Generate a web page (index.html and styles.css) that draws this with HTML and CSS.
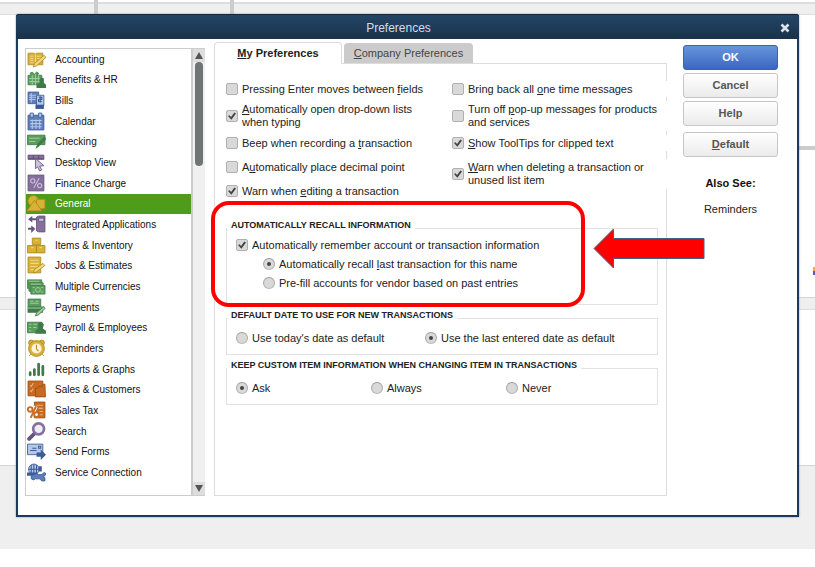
FILE: index.html
```html
<!DOCTYPE html>
<html lang="en">
<head>
    <meta charset="UTF-8">
    <meta name="viewport" content="width=device-width, initial-scale=1.0">
    <title>Preferences</title>
    <link rel="stylesheet" href="styles.css">
</head>
<body>
    <!-- home page behind the dialog -->
    <div class="backdrop">
        <div class="strip-top"></div>
        <div class="card card-tall"></div>
        <div class="strip"></div>
        <div class="card card-short"></div>
        <div class="strip-bottom"></div>
        <div class="pipe pipe-a"></div>
        <div class="pipe pipe-b"></div>
        <div class="pipe-right"></div>
        <div class="sliver"></div>
    </div>

    <div class="dialog" role="dialog" aria-labelledby="title">
        <div class="titlebar">
            <h1 id="title">Preferences</h1>
            <button class="close" type="button" aria-label="Close">
                <svg viewBox="0 0 10 10"><path d="M1.5 1.5l7 7M8.500 1.500l-7 7"/></svg>
            </button>
        </div>

        <div class="content">
            <div class="sidebar">
                <nav class="list">
                    <a href="#" class="item yellow">
                        <svg viewBox="0 0 18 18"><path class="f" d="M1 3h6l1 1 1-1h6v11H9l-1 1-1-1H1z"/><path class="w" d="M3 6h3M3 8h3M3 10h3M3 12h3M9.500 6h4M9.500 8h3M8 4v10"/><path class="l" d="M6 16l1-3 9-8 2 2-9 8z"/></svg>
                        Accounting</a>
                    <a href="#" class="item green">
                        <svg viewBox="0 0 18 18"><path class="f" d="M1 5h3l-1-2 2-1 2 2 2-2 2 1-1 2h4v9H1z"/><path class="w" d="M2 8h12M2 11h10M5 5v9M8 4v10M11 5v5"/><path class="d" d="M9 17v-3l3-2v-4l2-1 2 1v4l2 2v3z"/></svg>
                        Benefits &amp; HR</a>
                    <a href="#" class="item blue">
                        <svg viewBox="0 0 18 18"><path class="f" d="M1 1h10v11H1z"/><path class="w" d="M2 4h8M2 6h8M2 8h6M4 2v9"/><path class="l" d="M9 4h7v10H9z"/><path class="d" d="M8 13h8v4H8z"/><path class="k" d="M11 6h3v2h-3v2h3M12.500 5v6"/></svg>
                        Bills</a>
                    <a href="#" class="item blue">
                        <svg viewBox="0 0 18 18"><path class="f" d="M1 3h15v14H1z"/><path class="w" d="M3 8h11M3 11h11M3 14h11M5 7v9M8.500 7v9M12 7v9"/><path class="l" d="M3 1h3v4H3zM11 1h3v4h-3z"/></svg>
                        Calendar</a>
                    <a href="#" class="item green">
                        <svg viewBox="0 0 18 18"><path class="f" d="M0.500 3h16.500v9H.5z"/><path class="w" d="M2 6h10M2 9h6"/><path class="d" d="M8 16l2-5 7-7 1 3-7 7z"/></svg>
                        Checking</a>
                    <a href="#" class="item purple">
                        <svg viewBox="0 0 18 18"><path class="f" d="M1 2h5v4H1zM6 2h5v4H6zM11 2h5v4h-5z"/><path class="d" d="M1 5h15v1H1z"/><path class="l" d="M8 5l8 7-4 .5 2 3.500-2 1-2-4-2 2z"/></svg>
                        Desktop View</a>
                    <a href="#" class="item purple">
                        <svg viewBox="0 0 18 18"><path class="f" d="M1 1h15v15H1z"/><path class="w" d="M11.500 4l-5 9"/><circle class="w" cx="5.500" cy="6.500" r="2"/><circle class="w" cx="12" cy="11" r="2"/></svg>
                        Finance Charge</a>
                    <a href="#" class="item yellow selected">
                        <svg viewBox="0 0 18 18"><circle class="f" cx="6" cy="6.500" r="5"/><path class="f" d="M9 5h8v9H9z"/><path class="f" d="M7 6l7 10H0z"/></svg>
                        General</a>
                    <a href="#" class="item purple">
                        <svg viewBox="0 0 18 18"><path class="f" d="M9 2l2-1h6v15h-6l-2-1z"/><path class="l" d="M11 3h5v3h-5z"/><path class="d" d="M1 4l4-3v2h4v2H5v2zM8 13l-4-3v2H1v2h3v3z"/></svg>
                        Integrated Applications</a>
                    <a href="#" class="item yellow">
                        <svg viewBox="0 0 18 18"><path class="f" d="M5 2h8v6H5zM.5 9H9v7H.5zM9 9h8v7H9z"/><path class="w" d="M8 4h2M4 11h2M12 11h2"/></svg>
                        Items &amp; Inventory</a>
                    <a href="#" class="item yellow">
                        <svg viewBox="0 0 18 18"><path class="f" d="M1 1h12v15H1z"/><path class="w" d="M3 4h8M3 7h8M3 10h7M3 13h4"/><path class="l" d="M6 16l1-3 8-6 2 2-8 6z"/></svg>
                        Jobs &amp; Estimates</a>
                    <a href="#" class="item green">
                        <svg viewBox="0 0 20 18"><path class="f" d="M.5 2h15v9H.5z"/><path class="f" d="M2 5h15v9H2z"/><path class="f" d="M4 8h15v9H4z"/><path class="w" d="M2 3.500h11M4 6.500h11M6 10h2M15 10h2M6 15h2M15 15h2"/><circle class="w" cx="11.500" cy="12.500" r="2.500"/></svg>
                        Multiple Currencies</a>
                    <a href="#" class="item green">
                        <svg viewBox="0 0 18 18"><path class="f" d="M1 1h12v7H1z"/><path class="w" d="M3 3h3M8 3h3M3 5h8"/><path class="d" d="M.5 8H15v6H.5z"/><path class="w" d="M1 9.500h13"/><path class="l" d="M8 17l1-3 7-6 1 2-6 6z"/></svg>
                        Payments</a>
                    <a href="#" class="item green">
                        <svg viewBox="0 0 18 18"><path class="f" d="M.5 4H14v10H.5z"/><path class="w" d="M2 6h2M2 9h2M2 12h2M6 6h4M6 9h3"/><path class="d" d="M8 15v-3l3-2-1-4 2-2h2l2 2-1 4 3 2v3z"/></svg>
                        Payroll &amp; Employees</a>
                    <a href="#" class="item yellow">
                        <svg viewBox="0 0 18 18"><circle class="f" cx="4" cy="3.500" r="2.500"/><circle class="f" cx="14" cy="3.500" r="2.500"/><path class="f" d="M4 14l-2 2M14 14l2 2"/><circle class="f" cx="9" cy="9" r="7.500"/><circle class="p" cx="9" cy="9" r="4.800"/><path class="k" d="M9 5.500v4l2 2"/></svg>
                        Reminders</a>
                    <a href="#" class="item green">
                        <svg viewBox="0 0 18 18"><path class="bars" d="M3 12v2M7 9v5M11 4v10M15 6v8"/></svg>
                        Reports &amp; Graphs</a>
                    <a href="#" class="item orange">
                        <svg viewBox="0 0 18 18"><path class="f" d="M1 1h14v14H1z"/><path class="w" d="M3 5l1 1 2-3M3 10l1 1 2-3"/><path class="f" d="M8 8h2l1-2h2l1 1 1-3h2l.5 12H8z"/></svg>
                        Sales &amp; Customers</a>
                    <a href="#" class="item orange">
                        <svg viewBox="0 0 18 18"><path class="f" d="M7 1h10v15H7z"/><path class="w" d="M9 4h6M11 7h4M12 10h3M12 13h3"/><path class="halo" d="M8.500 5l-5 11"/><path class="o" d="M8.500 5l-5 11"/><circle class="q" cx="3" cy="8" r="2.200"/><circle class="q" cx="9" cy="13" r="2.200"/></svg>
                        Sales Tax</a>
                    <a href="#" class="item purple">
                        <svg viewBox="0 0 18 18"><path class="handle" d="M7 11l-5 5"/><circle class="lens" cx="11" cy="6.500" r="5.200"/></svg>
                        Search</a>
                    <a href="#" class="item blue">
                        <svg viewBox="0 0 18 18"><path class="l" d="M.5 2H15v10H.5z"/><path class="k" d="M3 8h6M5 6h4M11 4h2v2h-2z"/><path class="d" d="M9 10h4V7l5 5-5 5v-3H9z"/></svg>
                        Send Forms</a>
                    <a href="#" class="item blue">
                        <svg viewBox="0 0 18 18"><circle class="l" cx="6.500" cy="6" r="5"/><path class="k" d="M1 6h11M6.500 1v10M4 2v8M9 2v8"/><path class="d" d="M0 9h10v3H0zM11 3h3v5h-3z"/><path class="f" d="M4 12l5-2 2 1h3l2-2 2 1-1 2-2 1 2 1v3h-3l-2-2H8l-2 1-2-1z"/></svg>
                        Service Connection</a>
                </nav>
                <div class="scrollbar">
                    <span class="arrow-up"></span>
                    <span class="thumb"></span>
                    <span class="arrow-down"></span>
                </div>
            </div>

            <div class="main">
                <div class="tabs" role="tablist">
                    <button class="tab active" type="button" role="tab" aria-selected="true"><span><u>M</u>y Preferences</span></button>
                    <button class="tab" type="button" role="tab" aria-selected="false"><span><u>C</u>ompany Preferences</span></button>
                </div>

                <form class="panel">
                    <div class="options">
                        <div class="column">
                            <label class="option"><input type="checkbox"><span>Pressing Enter moves between <u>f</u>ields</span></label>
                            <label class="option tall"><input type="checkbox" checked><span><u>A</u>utomatically open drop-down lists<br>when typing</span></label>
                            <label class="option"><input type="checkbox"><span>Beep when recording a <u>t</u>ransaction</span></label>
                            <label class="option spaced"><input type="checkbox"><span>A<u>u</u>tomatically place decimal point</span></label>
                            <label class="option spaced"><input type="checkbox" checked><span>Warn when <u>e</u>diting a transaction</span></label>
                        </div>
                        <div class="column column-right">
                            <label class="option"><input type="checkbox"><span>Bring back all <u>o</u>ne time messages</span></label>
                            <label class="option tall"><input type="checkbox"><span>Turn off <u>p</u>op-up messages for products<br>and services</span></label>
                            <label class="option"><input type="checkbox" checked><span><u>S</u>how ToolTips for clipped text</span></label>
                            <label class="option tall spaced"><input type="checkbox" checked><span><u>W</u>arn when deleting a transaction or<br>unused list item</span></label>
                        </div>
                    </div>

                    <fieldset class="recall">
                        <legend>AUTOMATICALLY RECALL INFORMATION</legend>
                        <label class="option"><input type="checkbox" checked><span>Automatically remember account or transaction information</span></label>
                        <label class="option indent"><input type="radio" name="recall" checked><span>Automatically recall <u>l</u>ast transaction for this name</span></label>
                        <label class="option indent"><input type="radio" name="recall"><span>Pre-fill accounts for vendor based on past entries</span></label>
                        <div class="highlight"></div>
                        <svg class="arrow" viewBox="0 0 112 41"><path d="M1 20.500L20.500 1v9.500H111v20H20.500V40z"/></svg>
                    </fieldset>

                    <fieldset>
                        <legend>DEFAULT DATE TO USE FOR NEW TRANSACTIONS</legend>
                        <div class="choices two">
                            <label class="option"><input type="radio" name="date"><span>Use today's date as default</span></label>
                            <label class="option"><input type="radio" name="date" checked><span>Use the last entered date as default</span></label>
                        </div>
                    </fieldset>

                    <fieldset>
                        <legend>KEEP CUSTOM ITEM INFORMATION WHEN CHANGING ITEM IN TRANSACTIONS</legend>
                        <div class="choices three">
                            <label class="option"><input type="radio" name="keep" checked><span>Ask</span></label>
                            <label class="option"><input type="radio" name="keep"><span>Always</span></label>
                            <label class="option"><input type="radio" name="keep"><span>Never</span></label>
                        </div>
                    </fieldset>
                </form>
            </div>

            <div class="actions">
                <button class="btn primary" type="button">OK</button>
                <button class="btn" type="button">Cancel</button>
                <button class="btn" type="button">Help</button>
                <button class="btn default" type="button"><span><u>D</u>efault</span></button>
                <h2>Also See:</h2>
                <a href="#">Reminders</a>
            </div>
        </div>
    </div>
</body>
</html>
```
FILE: styles.css
```css
* {
    box-sizing: border-box;
    margin: 0;
    padding: 0;
}
body {
    position: relative;
    min-height: 100vh;
    padding: 14px 16px 0;
    overflow: hidden;
    font: 11px/13px "Liberation Sans", Arial, sans-serif;
    color: #222;
    background: #fff;
}
button {
    font: inherit;
    color: inherit;
}
a {
    color: inherit;
    text-decoration: none;
}

/* backdrop */
.backdrop {
    position: absolute;
    inset: 0;
    display: flex;
    flex-direction: column;
    padding: 2px 0 18px;
}
.strip-top {
    height: 12px;
    border-top: 2px solid #dcdcdc;
    background: #efefef;
}
.card {
    border-top: 1px solid #ddd;
    border-bottom: 1px solid #d4d4d4;
    background: #fff;
}
.card-tall {
    height: 284px;
}
.strip {
    height: 11px;
    background: #efefef;
}
.card-short {
    height: 157px;
}
.strip-bottom {
    flex: 1;
    background: #efefef;
}
.pipe {
    position: absolute;
    top: 0;
    width: 4px;
    height: 14px;
    background: #ccc;
}
.pipe-a {
    left: 94px;
}
.pipe-b {
    left: 230px;
}
.pipe-right {
    position: absolute;
    top: 146px;
    right: 0;
    width: 16px;
    height: 4px;
    background: #ccc;
}
.sliver {
    position: absolute;
    top: 267px;
    right: 0;
    width: 2px;
    height: 8px;
    background: linear-gradient(#f0b040 4px, #5b5ba8 4px);
}

/* dialog */
.dialog {
    position: relative;
    display: flex;
    flex-direction: column;
    min-height: calc(100vh - 64px);
    border: 2px solid #1b3a5c;
    border-top: 0;
    border-radius: 3px 3px 0 0;
    background: #fff;
    box-shadow: 0 0 2px #888;
}
.titlebar {
    position: relative;
    height: 25px;
    margin: 0 -2px;
    border-top: 1px solid #14283c;
    border-radius: 3px 3px 0 0;
    background: linear-gradient(#234566, #1a324b);
    text-align: center;
}
.titlebar h1 {
    padding-right: 18px;
    font-size: 12px;
    font-weight: normal;
    line-height: 26px;
    color: #d5dce4;
}
.close {
    position: absolute;
    top: 8px;
    right: 9px;
    width: 10px;
    height: 10px;
    border: 0;
    background: none;
}
.close svg {
    display: block;
    fill: none;
    stroke: #dde3ea;
    stroke-width: 2.5;
}
.content {
    flex: 1;
    display: flex;
    padding: 3px 19px 19px 7px;
}

/* category list */
.sidebar {
    display: flex;
    width: 180px;
    margin: 6px 9px 0 0;
    border: 1px solid #ccc;
    border-right: 0;
}
.list {
    flex: 1;
    display: grid;
    grid-template-rows: repeat(21, 1fr);
    padding-bottom: 12px;
}
.item {
    display: flex;
    align-items: center;
    gap: 9px;
    padding-left: 1px;
    font-size: 10px;
    color: #111;
}
.item svg {
    width: 19px;
    height: 19px;
}
.selected {
    color: #fff;
    background: #4e9c19;
}
.yellow {
    --base: #d8b234;
    --dark: #b08a22;
    --light: #f0d880;
}
.green {
    --base: #5a9e5e;
    --dark: #3f7a49;
    --light: #9fcc9c;
}
.blue {
    --base: #5f7fbb;
    --dark: #3c5a94;
    --light: #b4c8ea;
}
.purple {
    --base: #84709a;
    --dark: #65537a;
    --light: #cdbfe0;
}
.orange {
    --base: #c86a20;
    --dark: #9c4c12;
    --light: #eab080;
}
.f {
    fill: var(--base);
    stroke: var(--dark);
    stroke-width: 0.8;
}
.d {
    fill: var(--dark);
}
.l {
    fill: var(--light);
    stroke: var(--dark);
    stroke-width: 0.8;
}
.p {
    fill: #fdf6dc;
}
.w,
.k,
.o,
.halo {
    fill: none;
    stroke: var(--light);
}
.k {
    stroke: var(--dark);
}
.o {
    stroke: var(--base);
    stroke-width: 1.8;
}
.halo {
    stroke: #fff;
    stroke-width: 3.5;
}
.q {
    fill: #fff;
    stroke: var(--base);
    stroke-width: 1.8;
}
.bars {
    stroke: var(--dark);
    stroke-width: 2.6;
    stroke-linecap: round;
}
.handle {
    stroke: var(--dark);
    stroke-width: 3.5;
    stroke-linecap: round;
}
.lens {
    fill: #f0ecf6;
    stroke: var(--base);
    stroke-width: 2.5;
}
.scrollbar {
    display: flex;
    flex-direction: column;
    align-items: center;
    width: 14px;
    border-left: 2px solid #ccc;
    background: #f0f0f0;
}
.arrow-up,
.arrow-down {
    width: 12px;
    height: 13px;
    background: #dedede;
}
.arrow-up::before,
.arrow-down::before {
    content: "";
    display: block;
    width: 8px;
    height: 7px;
    margin: 3px 2px;
    background: #555;
    clip-path: polygon(50% 0, 100% 100%, 0 100%);
}
.arrow-down::before {
    clip-path: polygon(0 0, 100% 0, 50% 100%);
}
.arrow-down {
    margin-top: auto;
}
.thumb {
    width: 8px;
    height: 104px;
    border-radius: 4px;
    background: #6f7475;
}

/* tabs and panel */
.main {
    flex: 1;
    display: flex;
    flex-direction: column;
}
.tabs {
    display: flex;
    align-items: flex-end;
    gap: 2px;
}
.tab {
    width: 129px;
    height: 20px;
    margin-top: 1px;
    border: 0;
    border-radius: 4px 4px 0 0;
    background: #cbcbcb;
    color: #444;
}
.tab.active {
    position: relative;
    width: 128px;
    height: 22px;
    margin: 0 0 -1px;
    border: 1px solid #dcdcdc;
    border-bottom: 0;
    background: #fff;
    font-weight: bold;
    color: #222;
}
.panel {
    flex: 1;
    padding: 17px 8px 17px 11px;
    border: 1px solid #dcdcdc;
}
.options {
    display: grid;
    grid-template-columns: 1fr 1fr;
    margin: 0 -20px 21px 0;
}
.option {
    display: flex;
    align-items: center;
    gap: 4px;
    min-height: 16px;
}
.option.tall {
    min-height: 30px;
}
.column .option + .option {
    margin-top: 4px;
}
.column .option.spaced {
    margin-top: 8px;
}
.column-right .option {
    background: #fff;
}
input {
    appearance: none;
    flex: none;
    display: grid;
    place-content: center;
    width: 12px;
    height: 12px;
    border: 1px solid #b0b0b0;
    border-radius: 2px;
    background: #d9d9d9;
}
input[type="checkbox"]:checked::before {
    content: "";
    width: 8px;
    height: 8px;
    background: #444;
    clip-path: polygon(0 50%, 20% 40%, 38% 62%, 80% 6%, 100% 20%, 42% 96%);
}
input[type="radio"] {
    border-color: #999 #aaa #bbb;
    border-radius: 50%;
}
input[type="radio"]:checked::before {
    content: "";
    width: 4px;
    height: 4px;
    border-radius: 50%;
    background: #444;
}
fieldset {
    margin-top: 5px;
    padding: 4px 16px 8px 9px;
    border: 1px solid #e2e2e2;
}
legend {
    margin-left: -9px;
    padding: 0 4px 6px;
    font-size: 9px;
    font-weight: bold;
    line-height: 10px;
}
.recall {
    position: relative;
    padding-top: 1px;
    padding-bottom: 13px;
}
.recall .option + .option {
    margin-top: 3px;
}
.indent {
    margin-left: 27px;
}
.choices {
    display: grid;
}
.two {
    grid-template-columns: 7fr 8fr;
}
.three {
    grid-template-columns: repeat(3, 1fr);
}

/* callout drawn over the first group */
.highlight {
    position: absolute;
    top: -35px;
    right: 72px;
    bottom: -3px;
    left: -16px;
    border: 4px solid #f00;
    border-radius: 18px;
}
.arrow {
    position: absolute;
    top: -8px;
    right: -48px;
    width: 112px;
    fill: #f00;
    stroke: #41618c;
}

/* right hand buttons */
.actions {
    display: flex;
    flex-direction: column;
    gap: 3px;
    width: 95px;
    margin: 3px 0 0 16px;
    text-align: center;
}
.btn {
    height: 25px;
    border: 1px solid #c6c6c6;
    border-radius: 3px;
    background: linear-gradient(#fff, #ebebeb);
    font-weight: bold;
    color: #555;
}
.primary {
    border-color: #3c62a8;
    background: linear-gradient(#6795dc, #3c66c0);
    color: #fff;
}
.default {
    margin-top: 3px;
}
.actions h2 {
    margin: 17px 0 10px;
    font-size: 11px;
    color: #111;
}
```
